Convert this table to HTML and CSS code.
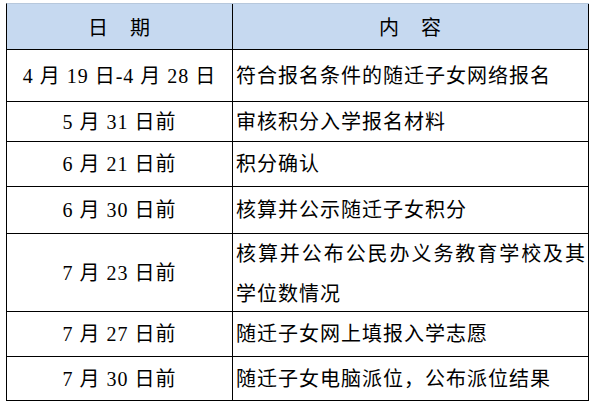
FILE: index.html
```html
<!DOCTYPE html>
<html lang="zh-CN">
<head>
<meta charset="utf-8">
<title>随迁子女入学时间安排</title>
<link rel="stylesheet" href="styles.css">
</head>
<body>
<div class="schedule">
  <div class="cell head date h0">日　期</div>
  <div class="cell head content-head h0">内　容</div>

  <div class="cell date">4 月 19 日-4 月 28 日</div>
  <div class="cell content">符合报名条件的随迁子女网络报名</div>

  <div class="cell date">5 月 31 日前</div>
  <div class="cell content">审核积分入学报名材料</div>

  <div class="cell date">6 月 21 日前</div>
  <div class="cell content">积分确认</div>

  <div class="cell date">6 月 30 日前</div>
  <div class="cell content">核算并公示随迁子女积分</div>

  <div class="cell date">7 月 23 日前</div>
  <div class="cell content multi">核算并公布公民办义务教育学校及其学位数情况</div>

  <div class="cell date">7 月 27 日前</div>
  <div class="cell content">随迁子女网上填报入学志愿</div>

  <div class="cell date">7 月 30 日前</div>
  <div class="cell content">随迁子女电脑派位，公布派位结果</div>
</div>
</body>
</html>
```

FILE: styles.css
```css
html, body {
  margin: 0;
  padding: 0;
  background: #ffffff;
}

body {
  font-family: "Liberation Serif", "Noto Sans CJK SC", serif;
  font-size: 20px;
  color: #000000;
}

.schedule {
  box-sizing: border-box;
  margin: 3px 0 0 6px;
  width: 583px;
  display: grid;
  grid-template-columns: 226px 356px;
  grid-template-rows: 46px 52px 40px 45px 47px 78px 45px 44px;
  border-left: 1px solid #000000;
  border-top: 1px solid #b7c8dc;
}

.cell {
  box-sizing: border-box;
  border-right: 1px solid #000000;
  border-bottom: 1px solid #000000;
  display: flex;
  align-items: center;
  letter-spacing: 1px;
  line-height: 40px;
  white-space: nowrap;
}

.head {
  background: #c6d9f0;
  font-family: "Noto Sans CJK SC", sans-serif;
}

.date {
  justify-content: center;
}

.content-head {
  justify-content: center;
}

.content {
  padding-left: 3px;
  padding-right: 2px;
}

.multi {
  display: block;
  white-space: normal;
  text-align: justify;
  text-align-last: left;
  text-justify: inter-character;
  padding-top: 0;
}
```
